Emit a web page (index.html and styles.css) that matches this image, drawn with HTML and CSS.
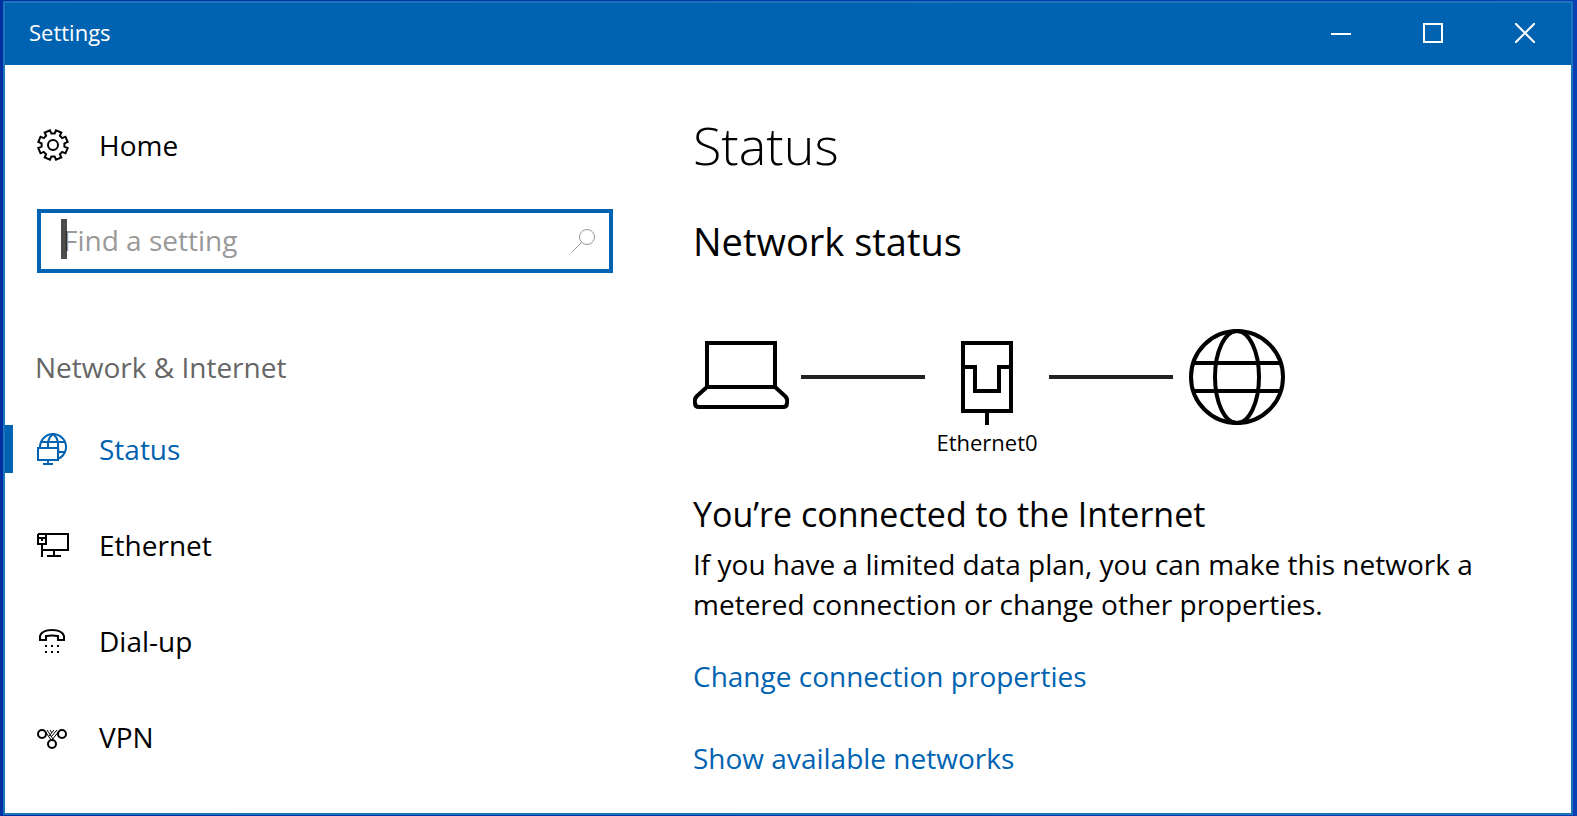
FILE: index.html
```
<!DOCTYPE html>
<html lang="en">
<head>
    <meta charset="UTF-8">
    <meta name="viewport" content="width=device-width, initial-scale=1.0">
    <title>Settings</title>
    <link rel="stylesheet" href="styles.css">
</head>
<body>
    <div class="window">
        <!-- Title bar -->
        <header class="titlebar">
            <span class="titlebar-title">Settings</span>
            <div class="window-buttons">
                <button type="button" aria-label="Minimize">
                    <svg width="20" height="20" viewBox="0 0 20 20"><path d="M0 11h20"/></svg>
                </button>
                <button type="button" aria-label="Maximize">
                    <svg width="20" height="20" viewBox="0 0 20 20"><path d="M1 1h18v18H1z"/></svg>
                </button>
                <button type="button" aria-label="Close">
                    <svg width="20" height="20" viewBox="0 0 20 20"><path d="M0 0l20 20M20 0L0 20"/></svg>
                </button>
            </div>
        </header>

        <div class="content">
            <!-- Sidebar -->
            <aside class="sidebar">
                <a href="#" class="nav-item">
                    <svg class="icon" viewBox="0 0 32 32">
                        <path d="M13 1.3L14.4 4.6 17.6 4.6 19 1.3 24.3 3.5 22.9 6.8 25.2 9.1 28.5 7.7 30.7 13 27.4 14.4 27.4 17.6 30.7 19 28.5 24.3 25.2 22.9 22.9 25.2 24.3 28.5 19 30.7 17.6 27.4 14.4 27.4 13 30.7 7.7 28.5 9.1 25.2 6.8 22.9 3.5 24.3 1.3 19 4.6 17.6 4.6 14.4 1.3 13 3.5 7.7 6.8 9.1 9.1 6.8 7.7 3.5Z"/>
                        <circle cx="16" cy="16" r="5"/>
                    </svg>
                    <span>Home</span>
                </a>

                <div class="search">
                    <span class="caret"></span>
                    <input type="text" placeholder="Find a setting" aria-label="Find a setting">
                    <button type="button" aria-label="Search">
                        <svg width="24" height="24" viewBox="0 0 24 24">
                            <circle cx="16" cy="8" r="7.5"/>
                            <path d="M0.5 23.5L10.5 13.5"/>
                        </svg>
                    </button>
                </div>

                <h2 class="nav-heading">Network &amp; Internet</h2>
                <nav>
                    <a href="#" class="nav-item active">
                        <svg class="icon" viewBox="0 0 32 32">
                            <path d="M3 14A13 13 0 1 1 22 25.5"/>
                            <path d="M4 9h24M22 19h6M11 14V9Q12 4 16 1Q20 4 21 9V14M21 14Q22 20 20 26"/>
                            <path class="screen" d="M1 15h20v12H1z"/>
                            <path d="M11 28v3M6 31h10"/>
                        </svg>
                        <span>Status</span>
                    </a>
                    <a href="#" class="nav-item">
                        <svg class="icon" viewBox="0 0 32 32">
                            <path d="M1 5h30v16H5M1 5v10h8V5M5 15v13M17 21v6M10 27h14M2 9h6M5 9v3"/>
                        </svg>
                        <span>Ethernet</span>
                    </a>
                    <a href="#" class="nav-item">
                        <svg class="icon" viewBox="0 0 32 32">
                            <path d="M9 11v4H3v-4Q5 5 15 5T27 11v4h-6v-4Q15 10 9 11z"/>
                            <path d="M8 21h2M14 21h2M20 21h2M8 27h2M14 27h2M20 27h2"/>
                        </svg>
                        <span>Dial-up</span>
                    </a>
                    <a href="#" class="nav-item">
                        <svg class="icon" viewBox="0 0 32 32">
                            <circle cx="5" cy="13" r="4"/>
                            <circle cx="25" cy="13" r="4"/>
                            <circle cx="15" cy="23" r="4"/>
                            <path class="thin" d="M8 10l6 9M10 9l6 9M13 9l2 3M22 10l-7 9M20 9l-6 7M17 9l-5 6"/>
                        </svg>
                        <span>VPN</span>
                    </a>
                </nav>
            </aside>

            <!-- Status page -->
            <main class="page">
                <h1>Status</h1>
                <h2>Network status</h2>

                <div class="diagram">
                    <svg width="96" height="96" viewBox="0 0 96 96">
                        <path d="M14 14h68v44H14z"/>
                        <path d="M14 58L4 67Q1 70 2 74Q2 78 6 78H90Q94 78 94 74Q95 70 92 67L82 58"/>
                    </svg>
                    <span class="link-line"></span>
                    <div class="adapter">
                        <svg width="52" height="96" viewBox="0 0 52 96">
                            <path d="M2 14h48v68H2zM2 38h12v24h24V38h12M26 82v14"/>
                        </svg>
                        <span>Ethernet0</span>
                    </div>
                    <span class="link-line"></span>
                    <svg class="globe" width="96" height="96" viewBox="0 0 96 96">
                        <circle cx="48" cy="48" r="46"/>
                        <ellipse cx="48" cy="48" rx="22" ry="46"/>
                        <path d="M4 34h88M4 62h88"/>
                    </svg>
                </div>

                <h3>You’re connected to the Internet</h3>
                <p>If you have a limited data plan, you can make this network a metered connection or change other properties.</p>
                <div class="links">
                    <a href="#">Change connection properties</a>
                    <a href="#">Show available networks</a>
                </div>
            </main>
        </div>
    </div>
</body>
</html>
```
FILE: styles.css
```
/* General Styles */
* {
    box-sizing: border-box;
}
body {
    margin: 0;
    min-height: 100vh;
    padding: 1px 4px 1px 3px;
    display: flex;
    background: linear-gradient(to right, #0030a0, #0a40b4);
    font-family: "Segoe UI", "Open Sans", "Noto Sans", sans-serif;
    font-size: 28px;
    line-height: 40px;
    color: #000;
}
h1, h2, h3, p {
    margin: 0;
    font-weight: 400;
}
a {
    color: #0063b1;
    text-decoration: none;
}
svg {
    display: block;
    flex: none;
    fill: none;
    stroke: currentColor;
    stroke-width: 2;
}
button {
    padding: 0;
    border: none;
    background: none;
    color: inherit;
}

/* Window */
.window {
    flex: 1;
    display: flex;
    flex-direction: column;
    border: 2px solid #1a75bc;
    background: #fff;
}
.titlebar {
    display: flex;
    justify-content: space-between;
    height: 62px;
    padding-left: 24px;
    background: #0063b1;
    color: #fff;
}
.titlebar-title {
    font-size: 22px;
    line-height: 58px;
}
.window-buttons {
    display: flex;
}
.window-buttons button {
    width: 92px;
    height: 60px;
    display: flex;
    align-items: center;
    justify-content: center;
}
.content {
    flex: 1;
    display: flex;
}

/* Sidebar */
.sidebar {
    flex: none;
    width: 608px;
    padding-top: 32px;
}
.nav-item {
    position: relative;
    display: flex;
    align-items: center;
    gap: 30px;
    height: 96px;
    padding-left: 32px;
    color: #000;
}
.nav-item.active {
    color: #0063b1;
}
.nav-item.active::before {
    content: "";
    position: absolute;
    left: 0;
    top: 24px;
    width: 8px;
    height: 48px;
    background: #0063b1;
}
.icon {
    width: 32px;
    height: 32px;
}
.icon .screen {
    fill: #fff;
}
.icon .thin {
    stroke-width: 1;
}
.nav-heading {
    margin-top: 64px;
    padding: 0 0 4px 30px;
    font-size: 28px;
    line-height: 60px;
    color: #666;
}

/* Search box */
.search {
    position: relative;
    display: flex;
    align-items: center;
    height: 64px;
    margin: 16px 0 0 32px;
    padding: 0 14px 0 22px;
    border: 4px solid #0063b1;
}
.search input {
    flex: 1;
    min-width: 0;
    padding: 0 0 2px;
    border: none;
    outline: none;
    background: none;
    font: inherit;
}
.search input::placeholder {
    color: #999;
    opacity: 1;
}
.search button {
    color: #999;
}
.search svg {
    stroke-width: 1;
}
.caret {
    position: absolute;
    left: 20px;
    top: 6px;
    width: 6px;
    height: 40px;
    background: rgba(0, 0, 0, 0.7);
}

/* Status page */
.page {
    flex: 1;
    padding: 44px 64px 0 80px;
}
.page h1 {
    font-size: 52px;
    font-weight: 300;
    line-height: 72px;
}
.page h2 {
    margin-top: 32px;
    font-size: 38px;
    line-height: 56px;
}
.page h3 {
    margin-top: 31px;
    font-size: 34px;
    line-height: 48px;
}
.page p {
    margin-top: 6px;
}
.links {
    display: flex;
    flex-direction: column;
    align-items: flex-start;
    gap: 42px;
    margin-top: 32px;
}

/* Connection diagram */
.diagram {
    display: flex;
    align-items: flex-start;
    margin-top: 60px;
}
.diagram svg {
    stroke-width: 4;
}
.link-line {
    width: 124px;
    height: 4px;
    margin-top: 46px;
    background: #222;
}
.diagram svg + .link-line {
    margin-left: 12px;
}
.adapter {
    width: 124px;
    display: flex;
    flex-direction: column;
    align-items: center;
    font-size: 22px;
    line-height: 34px;
}
.globe {
    margin-left: 16px;
}
```
